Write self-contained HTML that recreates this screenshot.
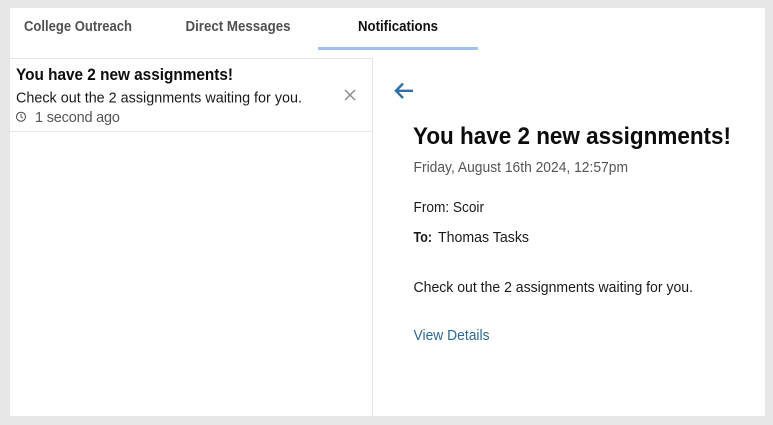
<!DOCTYPE html>
<html lang="en">
<head>
<meta charset="utf-8">
<title>Notifications</title>
<style>
html,body{margin:0;padding:0;width:773px;height:425px;overflow:hidden;background:#e6e6e6}
svg{display:block}
text{font-family:"Liberation Sans",Arial,sans-serif;white-space:pre}
</style>
</head>
<body>
<svg width="773" height="425" viewBox="0 0 773 425" xmlns="http://www.w3.org/2000/svg">
<rect width="773" height="425" fill="#e6e6e6"/>
<rect x="10" y="8" width="755" height="408" fill="#fff"/>

<text x="24" y="31" font-size="14.500" font-weight="700" fill="#505050" textLength="108" lengthAdjust="spacingAndGlyphs">College Outreach</text>
<text x="185.500" y="31" font-size="14.500" font-weight="700" fill="#505050" textLength="105" lengthAdjust="spacingAndGlyphs">Direct Messages</text>
<text x="358" y="31" font-size="14.500" font-weight="700" fill="#111" textLength="80" lengthAdjust="spacingAndGlyphs">Notifications</text>
<rect x="318" y="47" width="160" height="3" fill="#a0c0f0"/>

<rect x="10" y="58" width="363" height="1" fill="#e4e4e4"/>
<rect x="372" y="58" width="1" height="358" fill="#e4e4e4"/>
<rect x="10" y="131" width="362" height="1" fill="#e8e8e8"/>

<text x="16" y="80" font-size="16.500" font-weight="700" fill="#0c0c0c" textLength="217" lengthAdjust="spacingAndGlyphs">You have 2 new assignments!</text>
<text x="16" y="102.500" font-size="15" fill="#1a1a1a" textLength="286" lengthAdjust="spacingAndGlyphs">Check out the 2 assignments waiting for you.</text>
<circle cx="21" cy="116.700" r="4.500" fill="none" stroke="#444" stroke-width="1"/>
<path d="M21 113.800V117L23 118.100" fill="none" stroke="#444" stroke-width=".9"/>
<text x="35" y="122" font-size="14.500" fill="#555" textLength="85" lengthAdjust="spacing">1 second ago</text>
<path d="M345 90L355 100M355 90L345 100" fill="none" stroke="#8c8c8c" stroke-width="1.500"/>

<path d="M413 90.800H397M403 83.500L396 90.800L403 98" fill="none" stroke="#2f6fa3" stroke-width="2.400"/>

<text x="413" y="144" font-size="24" font-weight="700" fill="#0c0c0c" textLength="318" lengthAdjust="spacingAndGlyphs">You have 2 new assignments!</text>
<text x="413.500" y="172" font-size="15" fill="#555" textLength="214.500" lengthAdjust="spacingAndGlyphs">Friday, August 16th 2024, 12:57pm</text>
<text x="413.500" y="212" font-size="15" fill="#1a1a1a" textLength="70.500" lengthAdjust="spacingAndGlyphs">From: Scoir</text>
<text x="413.500" y="242" font-size="15" font-weight="700" fill="#1a1a1a" textLength="18.500" lengthAdjust="spacingAndGlyphs">To:</text>
<text x="438" y="242" font-size="15" fill="#1a1a1a" textLength="91" lengthAdjust="spacingAndGlyphs">Thomas Tasks</text>
<text x="413.500" y="292" font-size="15" fill="#1a1a1a" textLength="279.500" lengthAdjust="spacingAndGlyphs">Check out the 2 assignments waiting for you.</text>
<text x="413.500" y="340" font-size="15" fill="#2a6a96" textLength="76" lengthAdjust="spacingAndGlyphs">View Details</text>
</svg>
</body>
</html>
